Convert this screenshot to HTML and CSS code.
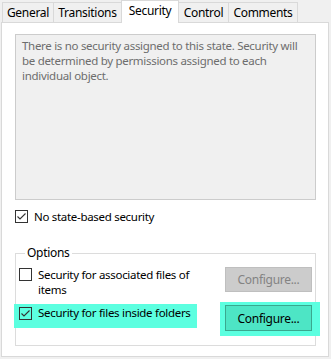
FILE: index.html
```html
<!DOCTYPE html>
<html>
<head>
<meta charset="utf-8">
<link rel="stylesheet" href="styles.css">
</head>
<body>
<div class="dialog">
  <div class="tabs">
    <div class="tab t-general">General</div>
    <div class="tab t-trans">Transitions</div>
    <div class="tab t-sec selected">Security</div>
    <div class="tab t-ctrl">Control</div>
    <div class="tab t-comm">Comments</div>
  </div>
  <div class="panel">
    <div class="desc">There is no security assigned to this state. Security will be determined by permissions assigned to each individual object.</div>
    <div class="check-row main-check">
      <span class="box"><svg width="11" height="11" viewBox="0 0 11 11"><polyline points="1.5,5.5 4,8 9.5,2.5" fill="none" stroke="#333" stroke-width="1.1"/></svg></span>
      <span class="label">No state-based security</span>
    </div>
    <fieldset class="group">
      <legend>Options</legend>
      <div class="opt-row first">
        <div class="opt-left">
          <span class="box"></span>
          <span class="label wrap">Security for associated files of items</span>
        </div>
        <button class="btn disabled" type="button">Configure...</button>
      </div>
      <div class="opt-row second">
        <div class="opt-left hl">
          <span class="box"><svg width="11" height="11" viewBox="0 0 11 11"><polyline points="1.5,5.5 4,8 9.5,2.5" fill="none" stroke="#333" stroke-width="1.1"/></svg></span>
          <span class="label">Security for files inside folders</span>
        </div>
        <span class="btn-hl"><button class="btn active" type="button">Configure...</button></span>
      </div>
    </fieldset>
  </div>
</div>
</body>
</html>
```
FILE: styles.css
```css
html, body {
  margin: 0;
  padding: 0;
  background: #f0f0f0;
  font-family: "Noto Sans", "Open Sans", sans-serif;
  font-size: 11.5px;
  letter-spacing: -0.3px;
  color: #000;
}
.dialog {
  width: 331px;
  height: 359px;
  padding-left: 1px;
  box-sizing: border-box;
}
.tabs {
  display: flex;
  align-items: flex-end;
  height: 22px;
  padding-left: 1px;
}
.tab {
  height: 20px;
  box-sizing: border-box;
  border: 1px solid #d9d9d9;
  border-bottom: none;
  background: #f0f0f0;
  display: flex;
  align-items: center;
  justify-content: center;
  margin-left: -1px;
  line-height: 16px;
  font-size: 12px;
}
.t-general { width: 52px; margin-left: 0; }
.t-trans { width: 69px; }
.t-sec { width: 58px; }
.t-ctrl { width: 51px; }
.t-comm { width: 70px; }
.tab.selected {
  height: 23px;
  margin-bottom: -1px;
  background: #fff;
  position: relative;
  padding-bottom: 3px;
}
.panel {
  width: 328px;
  height: 335px;
  box-sizing: border-box;
  border: 1px solid #d9d9d9;
  background: #fff;
  padding: 11px 0 0 13px;
}
.desc {
  width: 301px;
  height: 166px;
  box-sizing: border-box;
  border: 1px solid #cccccc;
  background: #f0f0f0;
  color: #6d6d6d;
  padding: 3px 6px 0 6px;
  line-height: 15px;
}
.check-row {
  display: flex;
  align-items: center;
}
.main-check {
  margin-top: 9px;
  height: 15px;
}
.box {
  width: 13px;
  height: 13px;
  box-sizing: border-box;
  border: 1px solid #333;
  flex: none;
  display: flex;
  align-items: center;
  justify-content: center;
}
.box svg { display: block; }
.label {
  margin-left: 6px;
  line-height: 15px;
}
.group {
  width: 301px;
  box-sizing: border-box;
  margin: 21px 0 0 0;
  padding: 6px 3px 14px 3px;
  border: 1px solid #dcdcdc;
  min-inline-size: 0;
}
.group legend {
  padding: 0 2px;
  margin-left: 6px;
  line-height: 16px;
  font-size: 12px;
}
.opt-row {
  display: flex;
  align-items: flex-start;
  justify-content: space-between;
}
.opt-row.second {
  margin-top: 8px;
}
.opt-left {
  display: flex;
  align-items: flex-start;
  width: 177px;
}
.opt-left .box { margin-top: 1px; }
.label.wrap { width: 158px; }
.hl {
  background: #5cffe0;
  margin: -1px 0 0 -5px;
  padding: 1px 0 8px 5px;
  width: 178px;
}
.hl .box { margin-top: 2px; }
.btn {
  width: 87px;
  height: 25px;
  box-sizing: border-box;
  font-family: inherit;
  font-size: 12px;
  letter-spacing: -0.3px;
  padding: 0;
  margin: 0;
  border: 1px solid #adadad;
  display: block;
}
.btn.disabled {
  background: #cccccc;
  border-color: #bfbfbf;
  color: #838383;
}
.btn-hl {
  display: block;
  background: #5cffe0;
  padding: 3px 8px 5px 5px;
  margin: -3px -8px -5px -5px;
}
.btn.active {
  background: #4de5c5;
  border-color: #3aa88f;
  color: #000;
  height: 26px;
}
```
